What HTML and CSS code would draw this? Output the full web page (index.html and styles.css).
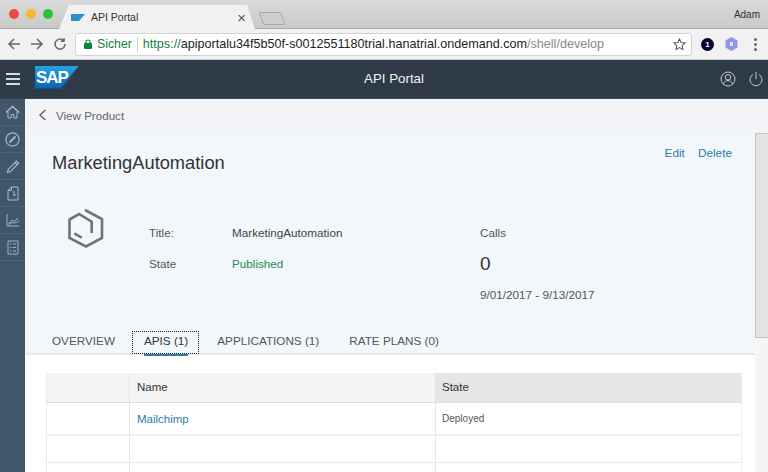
FILE: index.html
```html
<!DOCTYPE html>
<html lang="en">
<head>
<meta charset="utf-8">
<title>API Portal</title>
<link rel="stylesheet" href="styles.css">
</head>
<body>
<div class="tabbar">
  <div class="lights"><i class="red"></i><i class="yellow"></i><i class="green"></i></div>
  <div class="tab">
    <svg class="fav" width="14" height="7" viewBox="0 0 14 7"><path d="M0 0H14L8 7H0Z" fill="#2b8fd0"/></svg>
    <span class="tab-title">API Portal</span>
    <span class="tab-close">×</span>
  </div>
  <div class="newtab"></div>
  <span class="user">Adam</span>
</div>
<div class="toolbar">
  <svg class="nav-ic" width="14" height="14" viewBox="0 0 14 14"><path d="M13 7H2M7 2L2 7l5 5" fill="none" stroke="#666" stroke-width="1.5"/></svg>
  <svg class="nav-ic" width="14" height="14" viewBox="0 0 14 14"><path d="M1 7h11M7 2l5 5-5 5" fill="none" stroke="#666" stroke-width="1.5"/></svg>
  <svg class="nav-ic" width="14" height="14" viewBox="0 0 14 14"><path d="M12 7a5 5 0 1 1-1.500-3.500M11 1v3.200H7.800" fill="none" stroke="#666" stroke-width="1.5"/></svg>
  <div class="omnibox">
    <svg width="8" height="10" viewBox="0 0 8 10"><path d="M2 4V3a2 2 0 0 1 4 0v1" fill="none" stroke="#0b8043" stroke-width="1.2"/><rect y="4" width="8" height="6" rx="1" fill="#0b8043"/></svg>
    <span class="secure">Sicher</span>
    <span class="url"><span class="https">https://</span>apiportalu34f5b50f-s0012551180trial.hanatrial.ondemand.com<span class="path">/shell/develop</span></span>
    <svg class="star" width="13" height="13" viewBox="0 0 14 14"><path d="M7 1l1.800 3.900 4.200.5-3.100 2.900.8 4.200L7 10.400 3.300 12.500l.8-4.200L1 5.400l4.200-.5Z" fill="none" stroke="#555" stroke-width="1.1"/></svg>
  </div>
  <span class="ext-one">1</span>
  <svg class="ext-hex" width="13" height="14" viewBox="0 0 13 14"><path d="M6.500 0l6 3.500v7l-6 3.500-6-3.500v-7Z" fill="#8f96e8"/><rect x="5" y="5" width="3" height="4" fill="#dfe1fa"/></svg>
  <span class="dots"><i></i><i></i><i></i></span>
</div>
<header class="shell">
  <div class="shell-left">
    <span class="burger"><i></i><i></i><i></i></span>
    <div class="logo"><span>SAP</span></div>
  </div>
  <div class="shell-title">API Portal</div>
  <div class="shell-right">
    <svg width="16" height="16" viewBox="0 0 16 16"><g fill="none" stroke="#c3c9ce" stroke-width="1"><circle cx="8" cy="8" r="7"/><circle cx="8" cy="6.300" r="2.700"/><path d="M3.300 13c.8-2.200 2.500-3.400 4.700-3.400s3.900 1.200 4.700 3.400"/></g></svg>
    <svg width="14" height="16" viewBox="0 0 14 16"><g fill="none" stroke="#c3c9ce" stroke-width="1"><path d="M7 1v7"/><path d="M4 3.500a6 6 0 1 0 6 0"/></g></svg>
  </div>
</header>
<div class="main">
  <nav class="side">
    <div class="side-item"><svg width="15" height="14" viewBox="0 0 15 14"><path d="M1 7.500L7.500 1.500 14 7.500" fill="none" stroke="#aebbc6" stroke-width="1.600"/><path d="M3 7v6h3.200V9.500h2.600V13H12V7" fill="none" stroke="#aebbc6"/></svg></div>
    <div class="side-item"><svg width="15" height="15" viewBox="0 0 15 15"><circle cx="7.500" cy="7.500" r="6.600" fill="none" stroke="#aebbc6" stroke-width="1.200"/><path d="M4.500 10.500l6-6" fill="none" stroke="#aebbc6" stroke-width="1.800"/></svg></div>
    <div class="side-item"><svg width="14" height="15" viewBox="0 0 14 15"><path d="M1.500 13.500l.8-3.300L10.500 2l2.200 2.200L4.500 12.500ZM9 3.500l2.200 2.200" fill="none" stroke="#aebbc6" stroke-width="1.100"/></svg></div>
    <div class="side-item"><svg width="12" height="15" viewBox="0 0 12 15"><path d="M4.500 1H11v13H1V4.500ZM4.500 1v3.500H1M7 5v5l2-1.500" fill="none" stroke="#aebbc6"/></svg></div>
    <div class="side-item"><svg width="14" height="14" viewBox="0 0 14 14"><path d="M1 1v12h12M2.500 11l3.500-4 2 1.500L12 5M2.500 12l3.500-2.500 3 .5 4-2" fill="none" stroke="#aebbc6" stroke-width=".9"/></svg></div>
    <div class="side-item"><svg width="12" height="15" viewBox="0 0 12 15"><path d="M1 1h10v13H1ZM3 4h1.500M6 4h3M3 7.500h1.500M6 7.500h3M3 11h1.500M6 11h3" fill="none" stroke="#aebbc6" stroke-width=".9"/></svg></div>
  </nav>
  <div class="content">
    <div class="crumb">
      <svg width="9" height="12" viewBox="0 0 9 12"><path d="M7.500 1L2 6l5.500 5" fill="none" stroke="#666" stroke-width="1.500"/></svg>
      <span>View Product</span>
    </div>
    <div class="scroll-area">
      <div class="page">
        <section class="hero">
          <div class="hero-top">
            <h1>MarketingAutomation</h1>
            <div class="actions"><a>Edit</a><a>Delete</a></div>
          </div>
          <div class="facts">
            <svg class="cube" width="36" height="41" viewBox="0 0 36 41"><g fill="none" stroke="#6f7478" stroke-width="2.600"><path d="M23.700 25V13.700L11 6 1.500 11.500V30L18 38.500 34 30V11L17 2"/><path d="M6.300 25.300l7.400 4.400"/></g></svg>
            <div class="labels"><span>Title:</span><span>State</span></div>
            <div class="values"><span>MarketingAutomation</span><span class="published">Published</span></div>
            <div class="calls">
              <span>Calls</span>
              <span class="count">0</span>
              <span>9/01/2017 - 9/13/2017</span>
            </div>
          </div>
          <div class="tabs">
            <span class="t">OVERVIEW</span>
            <span class="t active">APIS (1)</span>
            <span class="t">APPLICATIONS (1)</span>
            <span class="t">RATE PLANS (0)</span>
          </div>
        </section>
        <div class="table-wrap">
          <div class="row head"><div class="c1"></div><div class="c2">Name</div><div class="c3">State</div></div>
          <div class="row first"><div class="c1"></div><div class="c2 link">Mailchimp</div><div class="c3 small">Deployed</div></div>
          <div class="row"><div class="c1"></div><div class="c2"></div><div class="c3"></div></div>
          <div class="row"><div class="c1"></div><div class="c2"></div><div class="c3"></div></div>
        </div>
      </div>
      <div class="scrollbar"><div class="thumb"></div></div>
    </div>
  </div>
</div>
</body>
</html>
```
FILE: styles.css
```css
* { box-sizing: border-box; }
html, body { margin: 0; height: 472px; overflow: hidden; }
body { font-family: "Liberation Sans", Arial, sans-serif; color: #333; background: #fff; }

.tabbar { height: 29px; display: flex; align-items: flex-end; background: linear-gradient(#d9d9d9, #c9c9c9); border-bottom: 1px solid #a9a9a9; }
.lights { display: flex; gap: 7px; padding: 0 0 0 9px; align-self: center; }
.lights i { width: 10px; height: 10px; border-radius: 50%; display: block; }
.red { background: #f0454a; }
.yellow { background: #f5b82e; }
.green { background: #28c23f; }
.tab { margin-left: 6px; width: 196px; height: 24px; margin-bottom: -1px; background: #f1f1f1; display: flex; align-items: center; padding: 0 9px 0 8px; clip-path: polygon(0 100%, 5% 0, 96% 0, 100% 100%); }
.fav { margin-left: 4px; margin-right: 6px; }
.tab-title { font-size: 10.500px; color: #333; flex: 1; }
.tab-close { font-size: 15px; color: #555; line-height: 1; }
.newtab { width: 22px; height: 13px; margin: 0 0 3px 6px; border: 1px solid #a6a6a6; background: #cfcfcf; transform: skewX(20deg); border-radius: 2px; }
.user { margin-left: auto; margin-right: 8px; align-self: center; font-size: 10px; color: #333; }

.toolbar { height: 31px; background: #f1f1f1; display: flex; align-items: center; padding: 0 0 0 7px; border-bottom: 1px solid #d0d0d0; }
.nav-ic { margin-right: 9px; }
.nav-ic:nth-child(3) { margin-right: 8px; }
.omnibox { width: 617px; height: 23px; background: #fff; border: 1px solid #d3d3d3; border-radius: 3px; display: flex; align-items: center; padding: 0 5px 0 8px; font-size: 12.300px; white-space: nowrap; }
.secure { color: #0b8043; margin-left: 5px; padding-right: 5px; border-right: 1px solid #ccc; line-height: 15px; }
.url { margin-left: 5px; color: #222; flex: 1; font-size: 12.600px; }
.https { color: #0b8043; }
.path { color: #888; }
.ext-one { width: 13px; height: 13px; border-radius: 50%; background: #08082e; color: #fff; font-size: 8px; font-weight: bold; line-height: 13px; text-align: center; margin-left: 9px; }
.ext-hex { margin-left: 11px; }
.dots { margin-left: 16px; display: flex; flex-direction: column; gap: 2px; }
.dots i { width: 3px; height: 3px; border-radius: 50%; background: #666; display: block; }

.shell { height: 39px; background: #2e3a46; display: flex; align-items: center; position: relative; border-bottom: 1px solid #3b4855; }
.shell-left { display: flex; align-items: center; padding-left: 6px; }
.burger { display: flex; flex-direction: column; gap: 3px; width: 14px; }
.burger i { height: 2px; background: #d5dade; display: block; }
.logo { margin-left: 15px; width: 44px; height: 23px; margin-top: -4px; background: linear-gradient(#21a5e3, #0a5fae); clip-path: polygon(0 0, 100% 0, 59% 100%, 0 100%); }
.logo span { display: block; font-size: 17px; font-weight: bold; color: #fff; letter-spacing: -1px; padding-left: 1px; line-height: 23px; }
.shell-title { position: absolute; left: 0; right: 0; text-align: center; font-size: 13.300px; color: #f3f3f3; padding-left: 20px; padding-bottom: 2px; }
.shell-right { margin-left: auto; display: flex; align-items: center; gap: 13px; padding-right: 5px; position: relative; }

.main { height: 373px; display: flex; }
.side { width: 25px; background: #40566b; flex: none; }
.side-item { height: 27px; display: flex; align-items: center; justify-content: center; border-bottom: 1px solid #4e6378; }
.content { flex: 1; min-width: 0; display: flex; flex-direction: column; }
.crumb { height: 34px; background: #f2f4f7; display: flex; align-items: center; gap: 9px; padding: 0 0 2px 13px; font-size: 11.600px; color: #666; flex: none; }
.scroll-area { flex: 1; display: flex; min-height: 0; overflow: hidden; }
.page { flex: 1; min-width: 0; }
.hero { height: 222px; background: #f2f7fc; border-bottom: 2px solid #e6ebef; padding: 0 23px 0 27px; }
.hero-top { display: flex; justify-content: space-between; height: 73px; }
h1 { margin: 19px 0 0; font-size: 18.300px; font-weight: normal; color: #333; line-height: 22px; }
.actions { display: flex; gap: 13px; font-size: 11.800px; color: #2a7ca5; padding-top: 13px; }
.facts { display: flex; height: 106px; font-size: 11.700px; color: #555; }
.cube { margin: 2px 0 0 16px; flex: none; }
.labels, .values { display: flex; flex-direction: column; gap: 17px; padding-top: 20px; }
.labels span, .values span, .calls span { line-height: 14px; }
.labels { margin-left: 45px; width: 83px; }
.values { width: 248px; color: #444; }
.values .published { color: #1f8b4c; }
.calls { display: flex; flex-direction: column; padding-top: 20px; }
.calls .count { font-size: 19px; color: #333; line-height: 22px; margin: 13px 0 13px; }
.tabs { display: flex; font-size: 11.720px; color: #555; height: 41px; padding-top: 19px; }
.t { height: 23px; line-height: 20px; position: relative; }
.tabs .t:nth-child(1) { margin-right: 17px; }
.tabs .t:nth-child(2) { padding: 0 11px 0 12px; outline: 1px dotted #222; outline-offset: -1px; margin-right: 18px; color: #333; }
.tabs .t:nth-child(3) { margin-right: 30px; }
.active::after { content: ""; position: absolute; left: 12px; right: 11px; bottom: -2px; height: 2px; background: #2a7ca5; }

.table-wrap { padding: 18px 13px 0 21px; }
.row { display: grid; grid-template-columns: 83px 306px 1fr; height: 27px; border-bottom: 1px solid #e9e9e9; border-left: 1px solid #ececec; border-right: 1px solid #ececec; font-size: 11.500px; }
.row > div { border-right: 1px solid #e6e6e6; padding-left: 7px; line-height: 28px; }
.row > div:last-child { border-right: 0; }
.head { height: 30px; background: #f4f4f4; border-bottom: 1px solid #ddd; }
.head .c3 { background: #e6e6e6; }
.first { height: 33px; border-bottom: 2px solid #f0f0f0; }
.first > div { line-height: 32px; }
.link { color: #2a7ca5; }
.small { font-size: 10px; color: #555; }
.row > .c3 { padding-left: 6px; }

.scrollbar { width: 13px; background: #f5f5f5; flex: none; }
.thumb { height: 205px; background: #e3e3e3; border: 1px solid #c4c4c4; border-right: 0; }
```
